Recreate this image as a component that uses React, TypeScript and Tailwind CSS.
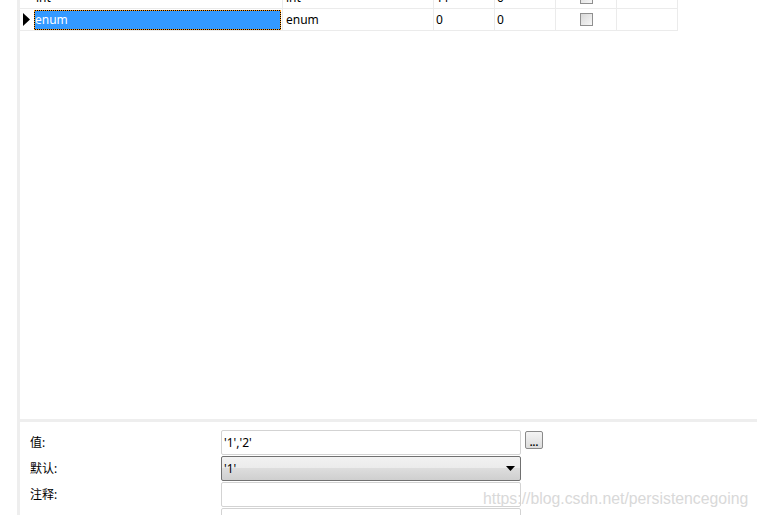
import React from "react";

const font = { fontFamily: '"Noto Sans", "Noto Sans CJK SC", sans-serif' };

function Checkbox() {
  return (
    <div className="w-[13px] h-[13px] border border-[#8f8f8f] bg-gradient-to-br from-[#d8d8d8] to-[#f7f7f7]" />
  );
}

function Row({ first, selected }: { first: string; selected?: boolean }) {
  const v = selected ? ["0", "0"] : ["11", "0"];
  return (
    <div className="flex h-[22px] border-b border-[#ebebeb] w-[658px] text-[12px] text-black">
      <div className="w-[13px] flex items-center justify-start pl-[3px]">
        {selected && (
          <svg width="7" height="13" viewBox="0 0 7 13">
            <path d="M0 0 L7 6.5 L0 13 Z" fill="#000" />
          </svg>
        )}
      </div>
      <div className="w-[250px] border-r border-[#ebebeb] pt-[1px] pl-[1px] pr-[1px]">
        {selected ? (
          <div className="h-[20px] bg-[#3399ff] border border-[#000] outline-1 outline-dotted outline-[#ff9a1a] -outline-offset-1 text-white leading-[18px]">
            {first}
          </div>
        ) : (
          <div className="pl-[2px] leading-[20px]">{first}</div>
        )}
      </div>
      <div className="w-[151px] border-r border-[#ebebeb] pl-[3px] leading-[21px]">{first}</div>
      <div className="w-[61px] border-r border-[#ebebeb] pl-[2px] leading-[21px]">{v[0]}</div>
      <div className="w-[61px] border-r border-[#ebebeb] pl-[2px] leading-[21px]">{v[1]}</div>
      <div className="w-[61px] border-r border-[#ebebeb] flex items-center justify-center">
        <Checkbox />
      </div>
      <div className="w-[61px] border-r border-[#ebebeb]" />
    </div>
  );
}

export default function App() {
  return (
    <div className="w-[757px] h-[515px] overflow-hidden bg-white flex relative" style={font}>
      <div className="w-[17px] shrink-0" />
      <div className="w-[3px] shrink-0 bg-[#eeeeee]" />
      <div className="flex-1 flex flex-col min-h-0">
        <div className="h-[419px] shrink-0 overflow-hidden">
          <div className="-mt-[13px]">
            <Row first="int" />
            <Row first="enum" selected />
          </div>
        </div>
        <div className="h-[3px] shrink-0 bg-[#eeeeee]" />
        <div className="flex-1 min-h-0 overflow-hidden pt-[8px] pl-[10px] text-[12px] text-black">
          <div className="grid grid-cols-[191px_300px_auto] gap-y-[1px] items-start">
            <div className="h-[25px] flex items-center">值:</div>
            <div className="h-[25px] border border-[#d3d3d3] rounded-[2px] flex items-center px-[2px]">'1','2'</div>
            <div className="pl-[4px] pt-[1px]">
              <div className="w-[18px] h-[18px] border border-[#8a8a8a] rounded-[2px] bg-gradient-to-b from-[#f4f4f4] to-[#dcdcdc] flex items-end justify-center text-[10px] leading-[12px] font-bold">
                ...
              </div>
            </div>
            <div className="h-[25px] flex items-center">默认:</div>
            <div className="h-[25px] border border-[#707070] rounded-[2px] flex items-center justify-between px-[2px] bg-[linear-gradient(#f2f2f2_0%,#ebebeb_50%,#dddddd_50%,#cfcfcf_100%)]">
              <span>'1'</span>
              <svg width="9" height="5" viewBox="0 0 9 5" className="mr-[3px]">
                <path d="M0 0 H9 L4.5 5 Z" fill="#000" />
              </svg>
            </div>
            <div />
            <div className="h-[25px] flex items-center">注释:</div>
            <div className="h-[25px] border border-[#d3d3d3] rounded-[2px]" />
            <div />
            <div />
            <div className="h-[25px] border border-[#d3d3d3] rounded-[2px] px-[2px] pt-[4px] leading-[16px]">utf8mb4</div>
            <div />
          </div>
        </div>
      </div>
      <div
        className="absolute left-[483px] top-[487px] text-[15.8px] text-[#d9d9d9]"
        style={{ fontFamily: '"Liberation Sans", Arial, sans-serif' }}
      >
        https://blog.csdn.net/persistencegoing
      </div>
    </div>
  );
}
